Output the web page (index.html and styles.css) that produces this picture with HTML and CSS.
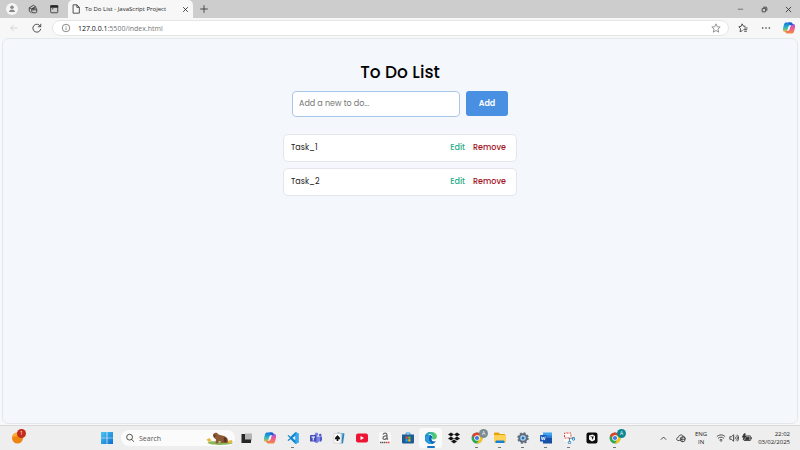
FILE: index.html
```html
<!DOCTYPE html>
<html lang="en">
<head>
    <meta charset="UTF-8">
    <meta name="viewport" content="width=device-width, initial-scale=1.0">
    <title>To Do List - JavaScript Project</title>
    <link rel="stylesheet" href="styles.css">
</head>
<body>
    <!-- shared icon shapes -->
    <svg class="defs" aria-hidden="true">
        <linearGradient id="winBlue" x1="0" y1="0" x2="1" y2="1">
            <stop offset="0" stop-color="#4cc6f5"/>
            <stop offset="1" stop-color="#0a6fd0"/>
        </linearGradient>
        <linearGradient id="copA" x1="0" y1="0" x2="0" y2="1">
            <stop offset="0" stop-color="#1b6fe0"/>
            <stop offset=".5" stop-color="#22b7c8"/>
            <stop offset="1" stop-color="#f2c230"/>
        </linearGradient>
        <linearGradient id="copB" x1="0" y1="0" x2="0" y2="1">
            <stop offset="0" stop-color="#a05be8"/>
            <stop offset=".5" stop-color="#ef5d8d"/>
            <stop offset="1" stop-color="#f58a3c"/>
        </linearGradient>
        <linearGradient id="edgeA" x1="0" y1="0" x2="1" y2="0">
            <stop offset="0" stop-color="#1aa3e0"/>
            <stop offset="1" stop-color="#5fd35a"/>
        </linearGradient>
        <symbol id="copilot" viewBox="0 0 24 24">
            <path fill="url(#copA)" d="M7 1h9c2 0 3 2 4 5h-5c-2 0-3 1-4 4l-2 6c-1 3-2 4-5 4-4 0-5-3-4-7l2-8c1-3 2-4 5-4z"/>
            <path fill="url(#copB)" d="M17 23H8c-2 0-3-2-4-5h5c2 0 3-1 4-4l2-6c1-3 2-4 5-4 4 0 5 3 4 7l-2 8c-1 3-2 4-5 4z"/>
            <path fill="#1b5fd0" d="M10 1h6c2 0 3 2 4 5h-5c-3 0-2-5-5-5z"/>
            <path fill="#f4f4f6" d="M11 9h4l-2 6H9z"/>
        </symbol>
        <symbol id="chrome" viewBox="0 0 24 24">
            <circle cx="12" cy="12" r="11" fill="#2fa653"/>
            <path fill="#e2402f" d="M2.500 6.500A11 11 0 0 1 21.500 6.500L12 7 7.500 14.500z"/>
            <path fill="#fbc116" d="M21.500 6.500A11 11 0 0 1 12 23l4.500-8.500L12 6.500z"/>
            <circle cx="12" cy="12" r="5.500" fill="#fff"/>
            <circle cx="12" cy="12" r="4.200" fill="#3b7ded"/>
        </symbol>
    </svg>

    <div class="browser">
        <div class="titlebar">
            <div class="titlebar-tools">
                <button class="icon-btn" aria-label="Profile">
                    <svg class="avatar" viewBox="0 0 24 24"><circle cx="12" cy="12" r="12" fill="#f4f4f4"/><circle cx="12" cy="8.500" r="3.500" fill="#888"/><path fill="#888" d="M6 18c0-7 12-7 12 0z"/></svg>
                </button>
                <button class="icon-btn" aria-label="Workspaces">
                    <svg class="icon" viewBox="0 0 24 24"><path d="M3 9l10-6 6 4v2M3 9v8l5 4M3 9l6 3 8-5"/><rect x="9" y="10" width="12" height="11" rx="3"/><path d="M9 14h12M14 10v4"/></svg>
                </button>
                <button class="icon-btn" aria-label="Tab actions">
                    <svg class="icon" viewBox="0 0 24 24"><rect x="4" y="4" width="17" height="17" rx="2"/><path fill="#222" d="M4 4h17v4H4z"/><path d="M9 9v4"/></svg>
                </button>
            </div>
            <div class="tab">
                <svg class="icon" viewBox="0 0 24 24"><path d="M5 2h9l6 6v14H5zM14 2v6h6"/></svg>
                <span class="tab-title">To Do List - JavaScript Project</span>
                <button class="icon-btn small" aria-label="Close tab">
                    <svg class="icon heavy" viewBox="0 0 24 24"><path d="M4 4l16 16M20 4L4 20"/></svg>
                </button>
            </div>
            <button class="icon-btn" aria-label="New tab">
                <svg class="icon" viewBox="0 0 24 24"><path d="M12 3v18M3 12h18"/></svg>
            </button>
            <div class="window-buttons">
                <button class="icon-btn small" aria-label="Minimize"><svg class="icon" viewBox="0 0 24 24"><path d="M3 11h18"/></svg></button>
                <button class="icon-btn small" aria-label="Restore"><svg class="icon heavy" viewBox="0 0 24 24"><rect x="4" y="8" width="12" height="12" rx="2"/><path d="M8 4h9c2 0 3 1 3 3v9"/></svg></button>
                <button class="icon-btn small" aria-label="Close"><svg class="icon heavy" viewBox="0 0 24 24"><path d="M3 3l18 18M21 3L3 21"/></svg></button>
            </div>
        </div>

        <div class="toolbar">
            <button class="icon-btn faded" aria-label="Back"><svg class="icon" viewBox="0 0 24 24"><path d="M21 12H4M11 5l-7 7 7 7"/></svg></button>
            <button class="icon-btn" aria-label="Refresh"><svg class="icon" viewBox="0 0 24 24"><path d="M20 8a9.500 9.500 0 1 0 1 6M21 2v7h-7"/></svg></button>
            <div class="address">
                <svg class="icon info" viewBox="0 0 24 24"><circle cx="12" cy="12" r="9"/><path d="M12 11v6M12 7v2"/></svg>
                <span class="url"><b>127.0.0.1</b>:5500/index.html</span>
                <button class="icon-btn faint" aria-label="Add to favorites"><svg class="icon" viewBox="0 0 24 24"><path d="M12 2l3 7 7 .6-5.400 4.800L18.500 22 12 18l-6.500 4 1.900-7.600L2 9.600 9 9z"/></svg></button>
            </div>
            <div class="toolbar-tools">
                <button class="icon-btn" aria-label="Favorites"><svg class="icon" viewBox="0 0 24 24"><path d="M18 8l-5-.5L10 2 7.500 8 2 9l4 4.500L5 21l6-3M15 12h8M13 16h9M15 20h6"/></svg></button>
                <button class="icon-btn" aria-label="Settings and more"><svg class="icon dots" viewBox="0 0 24 24"><circle cx="4" cy="12" r="2"/><circle cx="12" cy="12" r="2"/><circle cx="20" cy="12" r="2"/></svg></button>
                <button class="icon-btn" aria-label="Copilot"><svg class="app-icon"><use href="#copilot"/></svg></button>
            </div>
        </div>

        <main class="page">
            <h1>To Do List</h1>
            <form class="todo-form">
                <input type="text" class="todo-input" aria-label="New to do" placeholder="Add a new to do...">
                <button type="button" class="add-btn">Add</button>
            </form>
            <ul class="todo-list">
                <li class="todo-item">
                    <span class="todo-text">Task_1</span>
                    <button class="edit-btn">Edit</button>
                    <button class="remove-btn">Remove</button>
                </li>
                <li class="todo-item">
                    <span class="todo-text">Task_2</span>
                    <button class="edit-btn">Edit</button>
                    <button class="remove-btn">Remove</button>
                </li>
            </ul>
        </main>
    </div>

    <footer class="taskbar">
        <div class="widgets">
            <button class="app" aria-label="Widgets">
                <svg class="app-icon" viewBox="0 0 24 24"><circle cx="11" cy="12" r="11" fill="#ee8512"/><path fill="#f9ae35" d="M1 9a11 11 0 0 1 12-8l-4 8z"/></svg>
                <span class="badge count">1</span>
            </button>
        </div>
        <div class="apps">
            <button class="app start" aria-label="Start"><svg class="app-icon" viewBox="0 0 24 24"><path fill="url(#winBlue)" d="M0 0h11.300v11.300H0zM12.700 0H24v11.300H12.700zM0 12.700h11.300V24H0zM12.700 12.700H24V24H12.700z"/></svg></button>
            <label class="search">
                <svg class="icon" viewBox="0 0 24 24"><circle cx="11" cy="10" r="7"/><path d="M16 15l5 6"/></svg>
                <input type="search" class="search-input" placeholder="Search">
                <svg class="search-art" viewBox="0 0 54 28">
                    <path fill="#8db65a" d="M2 24c6-5 12-3 18-3h24c5 0 8 2 8 4-10 4-42 4-50-1z"/>
                    <path fill="#e5b93a" d="M0 17l6-3 4 5-6 3zM42 20l8-2 3 4-8 3z"/>
                    <path fill="#8e5a35" d="M13 7c3-5 9-4 11 0 4 2 10 1 15 5 5 4 5 9 2 12H29l-1-4-4 1-1 4h-5l1-8c-3-3-6-4-6-9z"/>
                    <path fill="#5d3821" d="M13 8l6 1-3 4zM35 12c6 2 8 7 4 11l-5-2z"/>
                </svg>
            </label>
            <button class="app" aria-label="Task view"><svg class="app-icon" viewBox="0 0 24 24"><path fill="#b5b5b5" d="M8 3h14v14H8z"/><path fill="#262626" d="M1 4h7v11h12v7H1z"/></svg></button>
            <button class="app" aria-label="Copilot"><svg class="app-icon"><use href="#copilot"/></svg></button>
            <button class="app running" aria-label="Visual Studio Code"><svg class="app-icon" viewBox="0 0 24 24"><path fill="#1587cf" d="M17 0l6 3v18l-6 3L7 14.500 3 18l-2-1.500L6 12 1 7.500 3 6l4 3.500zM17 7l-6 5 6 5z"/><path fill="#35a9ee" d="M17 0l6 3v18l-6 3z"/></svg></button>
            <button class="app" aria-label="Teams"><svg class="app-icon" viewBox="0 0 24 24"><circle cx="13" cy="4.500" r="3.500" fill="#7b83eb"/><circle cx="20.500" cy="6" r="2.500" fill="#5059c9"/><path fill="#7b83eb" d="M8 9h11v8a6 6 0 0 1-11 2z"/><path fill="#5059c9" d="M19 9h5v7a4 4 0 0 1-5 3z"/><rect y="6" width="13" height="13" rx="1" fill="#464eb8"/><path fill="#fff" d="M3 9h7v2H7.500v6h-2v-6H3z"/></svg></button>
            <button class="app" aria-label="Solitaire"><svg class="app-icon" viewBox="0 0 24 24"><path fill="#2f87bd" d="M9 1l14 2-3 20-8-1z"/><path fill="#a9d9ee" d="M7 2l12 1-2 19-7-1z"/><path fill="#fff" stroke="#bbb" d="M2 3h14v19H2z"/><path fill="#111" d="M9 6c2 3 5 4 5 7 0 2-3 3-4 1l1 4H7l1-4c-1 2-4 1-4-1 0-3 3-4 5-7z"/></svg></button>
            <button class="app" aria-label="YouTube"><svg class="app-icon" viewBox="0 0 24 24"><rect y="3" width="24" height="18" rx="4" fill="#ed1434"/><path fill="#fff" d="M9 8l7 4-7 4z"/></svg></button>
            <button class="app" aria-label="Amazon"><svg class="app-icon" viewBox="0 0 24 24"><rect width="24" height="24" rx="2" fill="#f9f9f9"/><path fill="none" stroke="#666" stroke-width="2.500" d="M8 5c2-4 8-4 8 1v7l2 2M16 8c-5-1-8 1-8 4 0 4 6 4 8-1"/><path fill="none" stroke="#555" stroke-width="3" stroke-dasharray="3 1" d="M2 21h12"/><path stroke="#d33b2f" stroke-width="3" stroke-dasharray="3 1" d="M14 21h8"/></svg></button>
            <button class="app" aria-label="Microsoft Store"><svg class="app-icon" viewBox="0 0 24 24"><path fill="none" stroke="#2ba0dd" stroke-width="2" d="M8 6V2h8v4"/><path fill="#1b5c96" d="M0 5h24v15c0 2-1 3-3 3H3c-2 0-3-1-3-3z"/><path fill="#e8533a" d="M7 9h4.500v4.500H7z"/><path fill="#7dbb2d" d="M12.500 9H17v4.500h-4.500z"/><path fill="#23a5e8" d="M7 14.500h4.500V19H7z"/><path fill="#fbbc1b" d="M12.500 14.500H17V19h-4.500z"/></svg></button>
            <button class="app active" aria-label="Edge"><svg class="app-icon" viewBox="0 0 24 24"><path fill="#1264b4" d="M12 0a12 12 0 1 0 10 18c-4 2-9 1-9-4 0-2 2-3 2-5C12 4 3 5 1 11z"/><path fill="url(#edgeA)" d="M0 11C1-4 24-3 24 9c0 6-7 7-10 5-1-1 1-2 1-5 0-6-11-7-15 2z"/><path fill="#2a9de0" d="M0 12C2 5 9 5 12 7c-6 1-6 12 3 16C7 26 0 20 0 12z"/></svg></button>
            <button class="app" aria-label="Dropbox"><svg class="app-icon" viewBox="0 0 24 24"><path fill="#151515" d="M6 1l6 4-6 4-6-4zM18 1l6 4-6 4-6-4zM6 9l6 4-6 4-6-4zM18 9l6 4-6 4-6-4zM12 15l6 4-6 4-6-4z"/></svg></button>
            <button class="app running" aria-label="Chrome"><svg class="app-icon"><use href="#chrome"/></svg><span class="badge grey">A</span></button>
            <button class="app running" aria-label="File Explorer"><svg class="app-icon" viewBox="0 0 24 24"><path fill="#e9a10b" d="M0 3c0-1 1-2 2-2h7l3 3h10v8H0z"/><path fill="#ffd257" d="M0 6h24v15H0z"/><path fill="#1780d0" d="M3 22v-3c0-1 1-2 2-2h14c1 0 2 1 2 2v3z"/></svg></button>
            <button class="app running" aria-label="Settings"><svg class="app-icon" viewBox="0 0 24 24"><circle cx="12" cy="12" r="9.500" fill="#5f6c7c" stroke="#5f6c7c" stroke-width="4" stroke-dasharray="4 3.460"/><circle cx="12" cy="12" r="5.500" fill="#b9d7ee"/><circle cx="12" cy="12" r="3" fill="#1877c9"/></svg></button>
            <button class="app running" aria-label="Word"><svg class="app-icon" viewBox="0 0 24 24"><path fill="#41a5ee" d="M6 1h18v7H6z"/><path fill="#2b7cd3" d="M6 7h18v6H6z"/><path fill="#174fa3" d="M6 12h18v11H6z"/><rect y="6" width="13" height="13" rx="1" fill="#185abd"/><path fill="none" stroke="#fff" stroke-width="1.600" d="M2.500 9l2 7 2-6 2 6 2-7"/></svg></button>
            <button class="app running" aria-label="Snipping Tool"><svg class="app-icon" viewBox="0 0 24 24"><rect x="2" y="1" width="17" height="18" rx="2" fill="#fafafa"/><path fill="none" stroke="#d7473d" stroke-width="2" stroke-dasharray="4 2" d="M13 12H3V2h13v9"/><path fill="none" stroke="#6c7884" stroke-width="2" d="M12 13l11-2M13 12v7"/><circle cx="13" cy="21" r="2.500" fill="none" stroke="#278cd4" stroke-width="2"/><circle cx="21" cy="14" r="2.500" fill="none" stroke="#278cd4" stroke-width="2"/></svg></button>
            <button class="app" aria-label="Cursor"><svg class="app-icon" viewBox="0 0 24 24"><rect x="1" y="1" width="22" height="22" rx="4" fill="#0b0b0b"/><path fill="#f4f4f4" d="M6 7l7-2 5 3v8l-6 3-6-4z"/><path fill="#0b0b0b" d="M8 9h8l-4 7v-5z"/></svg></button>
            <button class="app running" aria-label="Chrome profile"><svg class="app-icon"><use href="#chrome"/></svg><span class="badge teal">A</span></button>
        </div>
        <div class="tray">
            <button class="icon-btn small" aria-label="Show hidden icons"><svg class="icon heavy" viewBox="0 0 24 24"><path d="M3 16l9-9 9 9"/></svg></button>
            <svg class="icon cloud" viewBox="0 0 24 24"><path d="M9 18H5c-5 0-4-8 1-8C7 3 17 3 18 9c3 0 5 3 4 5"/><circle cx="16" cy="15" r="6"/><path d="M10 15h12M16 9c-3 4-3 8 0 12"/></svg>
            <span class="lang">ENG<br>IN</span>
            <div class="status">
                <svg class="icon" viewBox="0 0 24 24"><path d="M2 9c6-6 14-6 20 0M5 13c4-4 10-4 14 0M8.500 17c2-2 5-2 7 0"/><circle cx="12" cy="19" r="1"/></svg>
                <svg class="icon" viewBox="0 0 24 24"><path d="M2 9h4l5-5v16l-5-5H2zM14 9c2 2 2 4 0 6M17 6c4 4 4 8 0 12M20 4c4 5 4 11 0 16"/></svg>
                <svg class="icon" viewBox="0 0 24 24"><path d="M10 7h10v11H5v-4"/><path fill="#333" d="M10 10h7v6H8zM5 2L1 10h4l-2 6 7-9H6l2-5z"/><path d="M23 10v5"/></svg>
            </div>
            <span class="clock">22:02<br>03/02/2025</span>
        </div>
    </footer>
</body>
</html>
```
FILE: styles.css
```css
* {
    box-sizing: border-box;
}

body {
    margin: 0;
    min-height: 100vh;
    display: flex;
    flex-direction: column;
    font-family: "Open Sans", sans-serif;
    font-size: 6px;
    color: #222;
    background: #f7f8f9;
}

button,
input {
    font: inherit;
    color: inherit;
    border: none;
    background: none;
    padding: 0;
    margin: 0;
}

button {
    cursor: pointer;
}

.defs {
    position: absolute;
    width: 0;
    height: 0;
}

.icon {
    display: block;
    flex: none;
    width: 10px;
    height: 10px;
    fill: none;
    stroke: #333;
    stroke-width: 2;
}

.heavy {
    stroke-width: 3;
}

.icon-btn {
    display: flex;
    align-items: center;
    justify-content: center;
    width: 12px;
    height: 12px;
}

.small .icon {
    width: 7px;
    height: 7px;
}

.faded {
    opacity: 0.2;
}

.faint {
    opacity: 0.6;
}

.dots {
    fill: #333;
    stroke: none;
}

.app-icon {
    display: block;
    width: 12px;
    height: 12px;
}

/* browser window */
.browser {
    flex: 1;
    display: flex;
    flex-direction: column;
}

.titlebar {
    display: flex;
    align-items: center;
    height: 18px;
    background: #cdcdcd;
}

.titlebar-tools {
    display: flex;
    gap: 9px;
    width: 68px;
    padding-left: 6px;
}

.avatar {
    width: 12px;
    height: 12px;
}

.tab {
    display: flex;
    align-items: center;
    gap: 4px;
    width: 125px;
    height: 18px;
    margin-right: 5px;
    padding: 0 2px 0 3px;
    background: #f7f7f7;
    border-radius: 5px 5px 0 0;
}

.tab-title {
    flex: 1;
    white-space: nowrap;
}

.window-buttons {
    display: flex;
    gap: 12px;
    margin-left: auto;
    padding-right: 6px;
}

.toolbar {
    display: flex;
    align-items: center;
    height: 20px;
    padding: 0 5px 0 8px;
    gap: 11px;
    background: #f7f7f7;
}

.address {
    flex: 1;
    display: flex;
    align-items: center;
    gap: 7px;
    height: 16px;
    margin-left: -2px;
    padding: 0 6px 0 8px;
    background: #fff;
    border: 1px solid #e6e6e6;
    border-radius: 8px;
}

.url {
    flex: 1;
    font-size: 7px;
    color: #777;
}

.url b {
    font-weight: normal;
    color: #111;
}

.info {
    stroke: #777;
}

.toolbar-tools {
    display: flex;
    gap: 11px;
    margin-left: -3px;
}

/* to do page */
.page {
    flex: 1;
    margin: 0 2px 1px;
    padding-top: 22px;
    font-family: Poppins, Inter, sans-serif;
    font-size: 8px;
    background: #f4f8fd;
    border: 1px solid #e4e8ed;
    border-radius: 6px;
}

h1 {
    margin: 0 0 8px;
    font-size: 17px;
    font-weight: 500;
    line-height: 22px;
    text-align: center;
    color: #000;
}

.todo-form {
    display: flex;
    justify-content: center;
    gap: 6px;
    margin-bottom: 17px;
}

.todo-input {
    width: 168px;
    height: 26px;
    padding: 0 6px;
    background: #fff;
    border: 1px solid #a9c8ee;
    border-radius: 4px;
}

.todo-input::placeholder {
    color: #777;
}

.add-btn {
    width: 42px;
    height: 25px;
    font-weight: 600;
    color: #fff;
    background: #4a90e2;
    border-radius: 3px;
}

.todo-list {
    display: flex;
    flex-direction: column;
    gap: 6px;
    max-width: 234px;
    margin: 0 auto;
    padding: 0;
    list-style: none;
}

.todo-item {
    display: flex;
    align-items: center;
    gap: 8px;
    height: 28px;
    padding: 0 10px 0 7px;
    background: #fff;
    border: 1px solid #e3e7ec;
    border-radius: 5px;
}

.todo-text {
    flex: 1;
}

.edit-btn {
    font-weight: 500;
    color: #1fab89;
}

.remove-btn {
    font-weight: 500;
    color: #a3161f;
}

/* taskbar */
.taskbar {
    display: grid;
    grid-template-columns: 1fr auto 174px;
    align-items: center;
    height: 25px;
    background: #eeeeee;
    border-top: 1px solid #d9d9d9;
}

.widgets {
    padding-left: 6px;
}

.apps {
    display: flex;
    align-items: center;
}

.app {
    position: relative;
    display: flex;
    align-items: center;
    justify-content: center;
    width: 23px;
    height: 24px;
}

.start {
    width: 24px;
    margin-right: 2px;
}

.running::after,
.active::after {
    content: "";
    position: absolute;
    bottom: 2px;
    width: 3px;
    height: 1px;
    background: #777;
}

.active {
    height: 20px;
    background: #fafafa;
    border-radius: 3px;
}

.active::after {
    bottom: 0;
    width: 8px;
    height: 2px;
    background: #1673c4;
    border-radius: 1px;
}

.badge {
    position: absolute;
    top: 3px;
    right: 0;
    width: 9px;
    height: 9px;
    border-radius: 50%;
    font-size: 5px;
    line-height: 9px;
    text-align: center;
    color: #fff;
}

.count {
    right: 3px;
    background: #c42b1c;
}

.grey {
    background: #7d8b94;
}

.teal {
    background: #0b8793;
}

.search {
    display: flex;
    align-items: center;
    gap: 4px;
    width: 114px;
    height: 16px;
    padding: 0 1px 0 4px;
    background: #fbfbfb;
    border-radius: 8px;
}

.search-input {
    flex: 1;
    min-width: 0;
    font-size: 7px;
}

.search-input::placeholder {
    color: #555;
}

.search-art {
    width: 28px;
    height: 14px;
}

.tray {
    display: flex;
    align-items: center;
    padding: 0 10px 0 31px;
    line-height: 8px;
}

.cloud {
    margin: 0 9px 0 7px;
}

.lang {
    text-align: center;
}

.status {
    display: flex;
    gap: 3px;
    margin-left: 9px;
}

.clock {
    margin-left: auto;
    text-align: right;
}
```
